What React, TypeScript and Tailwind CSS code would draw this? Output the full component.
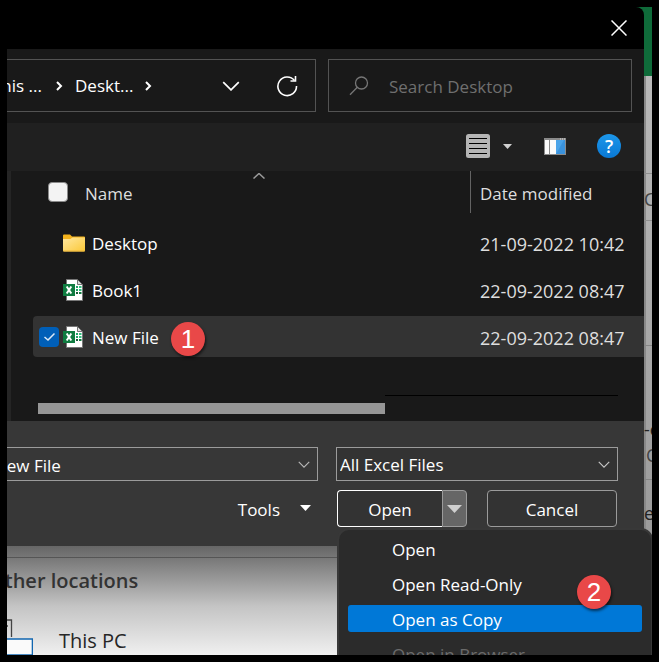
import type { ReactNode } from "react";

function Chevron({ className, d = "M1 1l7 7 7-7", box = "0 0 16 9" }: { className: string; d?: string; box?: string }) {
  return (
    <svg className={className} viewBox={box} fill="none" stroke="currentColor" strokeWidth="1.5" aria-hidden="true">
      <path d={d} />
    </svg>
  );
}

function CrumbArrow() {
  return (
    <svg className="h-[10px] w-[7px] text-white" viewBox="0 0 7 10" fill="none" stroke="currentColor" strokeWidth="2" aria-hidden="true">
      <path d="M1 1l4 4-4 4" />
    </svg>
  );
}

function FolderIcon() {
  return (
    <svg className="h-[18px] w-[22px]" viewBox="0 0 22 18" aria-hidden="true">
      <defs>
        <linearGradient id="folder" x1="0" y1="0" x2="1" y2="1">
          <stop offset="0" stopColor="#ffe8a0" />
          <stop offset="1" stopColor="#fbc837" />
        </linearGradient>
      </defs>
      <path d="M0 1.5Q0 .5 1 .5h6l2 2h12q1 0 1 1V8H0z" fill="#f5b31c" />
      <path d="M0 5h7.5l2-1.5H22v13q0 1-1 1H1q-1 0-1-1z" fill="url(#folder)" />
      <path d="M0 16.5h22q0 1-1 1H1q-1 0-1-1z" fill="#eeb63a" />
    </svg>
  );
}

function ExcelIcon() {
  return (
    <svg className="h-[22px] w-5" viewBox="0 0 20 22" aria-hidden="true">
      <path d="M3.500.5h11l5 5v16h-16z" fill="#fff" stroke="#777" />
      <path d="M14.500.5v5h5z" fill="#ddd" stroke="#555" strokeWidth=".8" />
      <path d="M13 7h2v2h-2zM13 10h2v2h-2z" fill="#21a366" />
      <path d="M13 13h2v2h-2z" fill="#185c37" />
      <path d="M16 7h2.500v2h-2.500zM16 10h2.500v2h-2.500z" fill="#33c481" />
      <path d="M16 13h2.500v2h-2.500z" fill="#107c41" />
      <path d="M0 5h12v12H0z" fill="#107c41" />
      <path d="M3.700 7.500l4.600 7M8.300 7.500l-4.600 7" stroke="#fff" strokeWidth="2" />
    </svg>
  );
}

function Badge({ children, className }: { children: ReactNode; className: string }) {
  return (
    <span
      className={`absolute flex size-[34px] items-center justify-center rounded-full bg-[#e94848] font-['Liberation_Sans',sans-serif] text-[26px] leading-none text-white shadow-[1px_2px_3px_rgba(0,0,0,0.6)] ${className}`}
    >
      {children}
    </span>
  );
}

function FileRow({ name, date, icon, selected, children }: { name: string; date: string; icon: ReactNode; selected?: boolean; children?: ReactNode }) {
  return (
    <tr className="h-[41px]">
      <td className={`rounded-l-sm p-0 ${selected ? "bg-[#333333]" : ""}`}>
        <div className="relative flex items-center pl-1.5">
          <span className="mr-1 grid size-5 place-items-center">
            {selected && (
              <>
                <input type="checkbox" defaultChecked aria-label={`Select ${name}`} className="col-start-1 row-start-1 size-5 appearance-none rounded bg-[#005fb8]" />
                <Chevron className="pointer-events-none col-start-1 row-start-1 h-2 w-[11px] text-[#dce9f6]" box="0 0 11 8" d="M.5 4l3.500 3L10.500.5" />
              </>
            )}
          </span>
          <span className="flex w-[29px]">{icon}</span>
          <span className="pt-0.5 text-[17px] leading-6">{name}</span>
          {children}
        </div>
      </td>
      <td className={`p-0 pt-0.5 pl-2.5 text-[18px] leading-6 whitespace-nowrap text-[#dedede] ${selected ? "bg-[#333333]" : ""}`}>{date}</td>
    </tr>
  );
}

function Titlebar() {
  return (
    <div className="flex h-[42px] items-center justify-end rounded-tr-lg bg-black pr-[17px]">
      <button aria-label="Close" className="text-white">
        <Chevron className="size-4" box="0 0 16 16" d="M.5.5l15 15M15.500.5l-15 15" />
      </button>
    </div>
  );
}

function NavigationRow() {
  return (
    <div className="flex gap-3 bg-[#191919] pt-2.5 pr-3 pb-[11px]">
      <nav className="-ml-5 flex h-[53px] flex-1 items-center border border-[#535353] pr-[17px] pl-1 text-[17px]" aria-label="Location">
        <button className="mr-3.5 whitespace-nowrap">This ...</button>
        <CrumbArrow />
        <button className="mx-3 whitespace-nowrap">Deskt...</button>
        <CrumbArrow />
        <button aria-label="Previous locations" className="mr-9 ml-auto">
          <Chevron className="h-[10px] w-[18px]" />
        </button>
        <button aria-label="Refresh">
          <svg className="size-[22px]" viewBox="0 0 22 22" fill="none" stroke="currentColor" strokeWidth="1.600" aria-hidden="true">
            <path d="M18.500 5.500A9.300 9.300 0 1 0 20.500 11" />
            <path d="M19.500 1v5H14.500" />
          </svg>
        </button>
      </nav>
      <label className="flex h-[53px] w-[304px] items-center border border-[#535353] pl-5 text-[#767676]">
        <svg className="mr-5 size-5 shrink-0" viewBox="0 0 20 20" fill="none" stroke="currentColor" strokeWidth="1.300" aria-hidden="true">
          <circle cx="12.500" cy="7" r="6" />
          <path d="M8.300 11.300L1 18.700" />
        </svg>
        <input type="search" aria-label="Search Desktop" placeholder="Search Desktop" className="w-full min-w-0 bg-transparent pt-0.5 text-[17px] outline-none placeholder:text-[#6f6f6f]" />
      </label>
    </div>
  );
}

function Toolbar() {
  return (
    <div className="flex h-12 items-center justify-end bg-[#202020] pr-[23px] pb-0.5">
      <button aria-label="View" className="mr-[13px]">
        <svg className="size-6" viewBox="0 0 24 24" aria-hidden="true">
          <rect width="24" height="24" rx="2.500" fill="#b5b5b5" />
          <path d="M3 4.500h18M3 9.500h18M3 14.500h18M3 19.500h18" stroke="#000" />
        </svg>
      </button>
      <button aria-label="More views" className="mr-8">
        <svg className="h-[5px] w-[9px]" viewBox="0 0 9 5" fill="#d0d0d0" aria-hidden="true">
          <path d="M0 0h9L4.500 5z" />
        </svg>
      </button>
      <button aria-label="Preview pane" className="mr-[31px]">
        <svg className="h-[17px] w-[22px]" viewBox="0 0 22 17" aria-hidden="true">
          <path d="M0 0h22v17H0z" fill="#8a8a8a" />
          <path d="M1 2h4v14H1zM6 2h6v14H6z" fill="#fafafa" />
          <path d="M12 2h9v14h-9z" fill="#4aa3e8" />
          <path d="M20 2h1v14h-9z" fill="#3a92dc" />
          <path d="M16 1h1M18 1h1M20 1h1" stroke="#ddd" />
        </svg>
      </button>
      <button aria-label="Help" className="flex size-6 items-center justify-center rounded-full bg-linear-to-b from-[#1c97ea] to-[#0a78d4] text-[18px] font-semibold text-white">
        ?
      </button>
    </div>
  );
}

function FileList() {
  return (
    <div className="flow-root border-l-4 border-[#252525] bg-[#191919] pb-[7px] pl-[22px]">
      <div className="-mt-1.5 h-[198px]">
        <table className="w-full table-fixed border-separate border-spacing-x-0 border-spacing-y-1.5 text-left">
          <thead>
            <tr className="h-[45px]">
              <th className="p-0 align-top font-normal">
                <div className="relative flex h-[42px] items-center pl-[15px]">
                  <input type="checkbox" aria-label="Select all" className="size-5 appearance-none rounded border border-[#8a8a8a] bg-[#f3f3f3]" />
                  <span className="ml-[17px] pt-1 text-[17px] leading-6 text-[#dedede]">Name</span>
                  <Chevron className="absolute top-0.5 left-1/2 ml-px h-[6px] w-3 text-[#9a9a9a]" box="0 0 12 6" d="M.5 5.500L6 .5l5.500 5" />
                </div>
              </th>
              <th className="w-[174px] p-0 align-top font-normal">
                <div className="flex h-[42px] items-center border-l border-[#636363] pt-1 pl-[9px] text-[17px] leading-6 text-[#dedede]">Date modified</div>
              </th>
            </tr>
          </thead>
          <tbody>
            <FileRow name="Desktop" date="21-09-2022 10:42" icon={<FolderIcon />} />
            <FileRow name="Book1" date="22-09-2022 08:47" icon={<ExcelIcon />} />
            <FileRow name="New File" date="22-09-2022 08:47" icon={<ExcelIcon />} selected>
              <Badge className="-top-0.5 left-[138px]">1</Badge>
            </FileRow>
          </tbody>
        </table>
      </div>
      <div className="mt-8 mr-[26px] ml-[5px] flex h-[19px] items-end">
        <div className="h-[11px] w-[347px] bg-[#969696]" />
        <div className="flex-1 self-start border-t border-black" />
      </div>
    </div>
  );
}

function OpenMenu() {
  const item = "block h-[27px] w-full rounded-[3px] pl-11 text-left text-[17px] leading-[29px] whitespace-nowrap";
  return (
    <div role="menu" className="absolute top-[38px] left-0 z-10 flex w-[316px] flex-col gap-2 rounded-xl border-2 border-[#383838] bg-[#2b2b2b] px-[9px] pt-[5px] pb-2">
      <button role="menuitem" className={item}>Open</button>
      <button role="menuitem" className={item}>Open Read-Only</button>
      <button role="menuitem" className={`${item} bg-[#0078d7]`}>Open as Copy</button>
      <button role="menuitem" disabled className={`${item} text-[#6b6b6b]`}>Open in Browser</button>
      <Badge className="top-[45px] left-[238px]">2</Badge>
    </div>
  );
}

function DialogFooter() {
  return (
    <div className="bg-[#373737] pt-[26px] pr-[26px] pb-[19px]">
      <div className="flex gap-[18px]">
        <div className="relative -ml-4 flex-1">
          <input aria-label="File name" defaultValue="New File" className="h-[34px] w-full border border-[#9b9b9b] bg-[#373737] pt-0.5 pl-0.5 text-[17px] outline-none" />
          <Chevron className="pointer-events-none absolute top-3.5 right-2 h-[7px] w-3 text-[#b8b8b8]" />
        </div>
        <div className="relative w-[282px]">
          <select aria-label="File type" className="h-[34px] w-full appearance-none border border-[#9b9b9b] bg-[#333333] pt-0.5 pl-[3px] text-[17px] outline-none">
            <option>All Excel Files</option>
          </select>
          <Chevron className="pointer-events-none absolute top-3.5 right-2 h-[7px] w-3 text-[#c8c8c8]" />
        </div>
      </div>
      <div className="mt-[9px] flex h-[37px] items-center justify-end text-[17px]">
        <button className="mr-[26px] flex items-center gap-5 pt-0.5">
          Tools
          <svg className="mb-1 h-[6px] w-[11px]" viewBox="0 0 11 6" fill="#fff" aria-hidden="true">
            <path d="M0 0h11L5.500 6z" />
          </svg>
        </button>
        <div className="relative mr-5 flex h-full w-[130px]">
          <button className="flex-1 rounded-l border border-r-0 border-white bg-[#333333] pt-0.5">Open</button>
          <button aria-label="Open options" className="flex w-[25px] items-center justify-center rounded-r border border-[#9b9b9b] bg-[#666666]">
            <svg className="h-2 w-[15px]" viewBox="0 0 15 8" fill="#cfcfcf" aria-hidden="true">
              <path d="M0 0h15L7.500 8z" />
            </svg>
          </button>
          <OpenMenu />
        </div>
        <button className="mr-px h-full w-[130px] rounded border border-[#9b9b9b] bg-[#333333] pt-0.5">Cancel</button>
      </div>
    </div>
  );
}

function BackdropEdge() {
  return (
    <div className="flex w-2 flex-col overflow-hidden bg-linear-to-b from-[#bdbdbd] to-[#9a9a9a] text-[18px] text-[#444444] shadow-[inset_2px_0_0_#888888]">
      <div className="h-[69px] shrink-0 bg-[#0f6b3a]" />
      <div className="h-[98px] shrink-0 border-b border-[#8e8e8e]" />
      <div className="flex h-[47px] shrink-0 items-center border-b border-[#8e8e8e] pt-1">C</div>
      <div className="h-[125px] shrink-0 border-b border-[#858585]" />
      <div className="h-[134px] shrink-0 border-b border-[#858585] pt-[70px] leading-[26px]">
        <div className="whitespace-nowrap text-[#222222]">-e</div>
        <div className="pl-0.5">C</div>
      </div>
      <div className="pt-5 text-[#222222]">e</div>
    </div>
  );
}

function OtherLocations() {
  return (
    <section className="h-[109px] overflow-hidden bg-linear-to-b from-[#666666] via-[#c4c4c4] via-55% to-[#f0f0f0] text-[#262626]">
      <h2 className="mt-[11px] -ml-[18px] border-t border-[#555555] pt-2 text-[20px] leading-[30px] font-semibold text-[#333333]">Other locations</h2>
      <div className="mt-[18px] flex gap-[26px]">
        <svg className="mt-[5px] h-9 w-[26px]" viewBox="0 0 26 36" fill="none" aria-hidden="true">
          <path d="M0 1h4.500v17M0 7h1" stroke="#444" strokeWidth="1.300" />
          <path d="M0 20h25.500v16H0" fill="#fafafa" stroke="#1166b0" strokeWidth="1.600" />
        </svg>
        <span className="pt-3 text-[20px] leading-[30px]">This PC</span>
      </div>
    </section>
  );
}

export default function App() {
  return (
    <div className="bg-black p-[7px] font-['Open_Sans','Noto_Sans',sans-serif] text-white">
      <main className="overflow-hidden">
        <div className="flex">
          <div className="min-w-0 flex-1 bg-[#0f6b3a]">
            <Titlebar />
            <NavigationRow />
            <Toolbar />
            <FileList />
            <DialogFooter />
          </div>
          <BackdropEdge />
        </div>
        <OtherLocations />
      </main>
    </div>
  );
}
